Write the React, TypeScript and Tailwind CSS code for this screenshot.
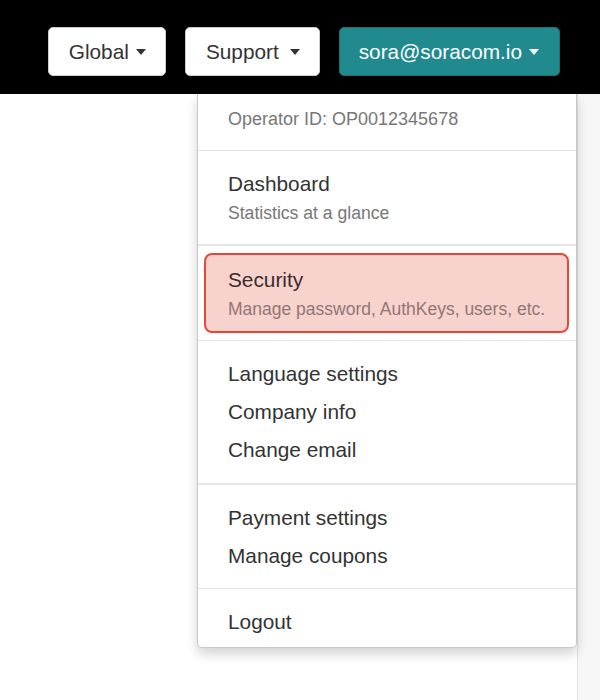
import React from 'react'

const font = { fontFamily: '"Liberation Sans", Arial, sans-serif' }

function Caret({ white }: { white?: boolean }) {
  return (
    <span
      className={`inline-block w-0 h-0 border-t-[6px] border-x-[5px] border-x-transparent ${white ? 'border-t-white' : 'border-t-[#333]'}`}
    />
  )
}

function Divider({ thick }: { thick?: boolean }) {
  return <div className={`${thick ? 'h-[2px]' : 'h-px'} bg-[#e5e5e5]`} />
}

function Item({ label }: { label: string }) {
  return <div className="pl-[30px] h-[38px] leading-[38px] text-[20.8px] text-[#333]">{label}</div>
}

export default function App() {
  return (
    <div className="relative h-[700px] w-[600px] overflow-hidden bg-white" style={font}>
      {/* top bar */}
      <header className="h-[94px] bg-black flex items-start justify-end pr-[40px] pt-[27px] gap-[19px]">
        <button className="h-[49px] flex items-center pl-[20px] pr-[19px] gap-[7px] bg-white border border-[#ccc] rounded-[5px] text-[20.8px] text-[#333]">
          Global <Caret />
        </button>
        <button className="h-[49px] flex items-center pl-[20px] pr-[19px] gap-[11px] bg-white border border-[#ccc] rounded-[5px] text-[20.8px] text-[#333]">
          Support <Caret />
        </button>
        <button className="h-[49px] flex items-center pl-[19px] pr-[20px] gap-[7px] bg-[#208a8f] border border-[#1a7176] rounded-[5px] text-[20.8px] text-white">
          sora@soracom.io <Caret white />
        </button>
      </header>

      {/* page body */}
      <div className="flex h-[606px]">
        <div className="flex-1 bg-white" />
        <div className="w-[23px] bg-[#f7f7f7] border-l border-[#e2e2e2]" />
      </div>

      {/* account dropdown */}
      <div className="absolute top-[94px] left-[197px] w-[380px] h-[554px] bg-white border border-[#c8c8c8] border-t-0 rounded-b-[5px] shadow-[0_6px_12px_rgba(0,0,0,0.175)]">
        <div className="pt-[12px] pl-[30px] h-[56px] leading-[26px] text-[18px] text-[#777]">Operator ID: OP0012345678</div>
        <Divider />
        <div className="pl-[30px] pt-[19px] h-[93px]">
          <div className="leading-[28px] text-[20.8px] text-[#333]">Dashboard</div>
          <div className="mt-[2px] leading-[26px] text-[17.6px] text-[#777]">Statistics at a glance</div>
        </div>
        <Divider thick />
        <div className="pl-[6px] pr-[7px] pt-[7px] pb-[7px]">
          <div className="h-[80px] border-2 border-[#e5483b] bg-[#f8d2cd] rounded-[8px] pl-[22px] pt-[11px]">
            <div className="leading-[28px] text-[20.8px] text-[#3b2d2b]">Security</div>
            <div className="mt-[2px] leading-[26px] text-[17.5px] text-[#927674]">Manage password, AuthKeys, users, etc.</div>
          </div>
        </div>
        <Divider />
        <div className="pt-[14px] h-[142px]">
          <Item label="Language settings" />
          <Item label="Company info" />
          <Item label="Change email" />
        </div>
        <Divider thick />
        <div className="pt-[14px] h-[103px]">
          <Item label="Payment settings" />
          <Item label="Manage coupons" />
        </div>
        <Divider />
        <div className="pt-[14px]">
          <Item label="Logout" />
        </div>
      </div>
    </div>
  )
}
